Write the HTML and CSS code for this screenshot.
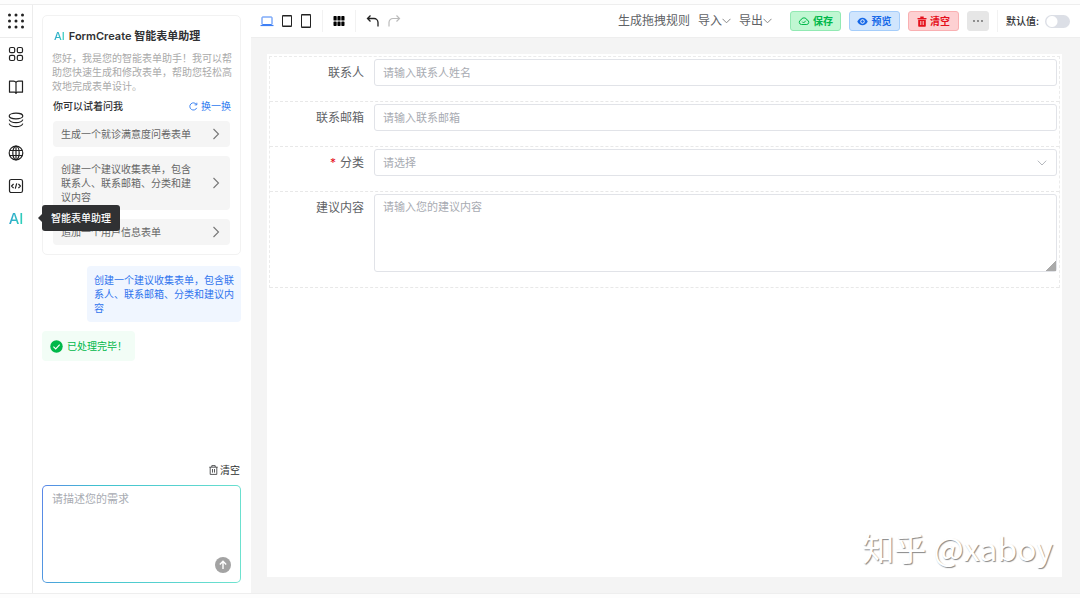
FILE: index.html
```html
<!DOCTYPE html>
<html lang="zh-CN">
<head>
<meta charset="utf-8">
<meta name="viewport" content="width=device-width, initial-scale=1">
<title>FormCreate 智能表单助理</title>
<link rel="stylesheet" href="styles.css">
</head>
<body>
<div class="app">
  <nav class="rail" aria-label="主菜单">
    <button class="rail-home" aria-label="应用">
      <svg width="18" height="18" viewBox="0 0 18 18" fill="#222"><circle cx="2.5" cy="3" r="1.5"/><circle cx="9" cy="3" r="1.5"/><circle cx="15.500" cy="3" r="1.5"/><circle cx="2.500" cy="9" r="1.5"/><circle cx="9" cy="9" r="1.5"/><circle cx="15.500" cy="9" r="1.5"/><circle cx="2.500" cy="15" r="1.5"/><circle cx="9" cy="15" r="1.5"/><circle cx="15.500" cy="15" r="1.5"/></svg>
    </button>
    <div class="rail-list">
      <button class="rail-item" aria-label="组件"><svg width="16" height="16" viewBox="0 0 16 16" class="line"><rect x="1.500" y="1.500" width="5.200" height="5.200" rx="1.500"/><rect x="9.300" y="1.500" width="5.200" height="5.200" rx="1.500"/><rect x="1.500" y="9.300" width="5.200" height="5.200" rx="1.500"/><rect x="9.300" y="9.300" width="5.200" height="5.200" rx="1.500"/></svg></button>
      <button class="rail-item" aria-label="模板"><svg width="16" height="16" viewBox="0 0 16 16" class="line"><path d="M8 3.500C7.500 2.500 6.500 2.200 5.500 2.200H1.500v11h5c.8 0 1.300.5 1.500 1.300.2-.8.700-1.300 1.500-1.300h5v-11h-4C9.500 2.200 8.500 2.500 8 3.500zV14.500"/></svg></button>
      <button class="rail-item" aria-label="数据"><svg width="16" height="16" viewBox="0 0 16 16" class="line"><ellipse cx="8" cy="4" rx="6.800" ry="2.800"/><path d="M1.200 7.600c.8 2 3.600 3 6.800 3s6-1 6.800-3M1.200 11.600c.8 2 3.600 3 6.800 3s6-1 6.800-3"/></svg></button>
      <button class="rail-item" aria-label="多语言"><svg width="16" height="16" viewBox="0 0 16 16" class="line"><circle cx="8" cy="8" r="6.800"/><ellipse cx="8" cy="8" rx="3.200" ry="6.800"/><path d="M8 1.300v13.400M1.900 5.500h12.200M1.900 10.500h12.200"/></svg></button>
      <button class="rail-item" aria-label="代码"><svg width="16" height="16" viewBox="0 0 16 16" class="line"><rect x="1.500" y="1.500" width="13" height="13" rx="1.800"/><path d="M5.600 5.800 3.600 8l2 2.200M10.400 5.800l2 2.200-2 2.200M8.700 5.300l-1.400 5.400"/></svg></button>
      <button class="rail-item rail-ai" aria-describedby="ai-tip"><span class="ai-mark">AI</span><span class="tip" role="tooltip" id="ai-tip">智能表单助理</span></button>
    </div>
  </nav>

  <aside class="assistant">
    <section class="intro">
      <h1 class="intro-title"><span class="ai-mark">AI</span><span>FormCreate 智能表单助理</span></h1>
      <p class="intro-text">您好，我是您的智能表单助手！我可以帮助您快速生成和修改表单，帮助您轻松高效地完成表单设计。</p>
      <div class="ask-head">
        <h2 class="ask-title">你可以试着问我</h2>
        <button class="swap"><svg width="9" height="9" viewBox="0 0 10 10" fill="none" stroke="currentColor"><path d="M8.600 6.500A4 4 0 1 1 8.300 2.800M8.700.8v2.400H6.300"/></svg>换一换</button>
      </div>
      <div class="asks">
        <button class="ask"><span class="ask-label">生成一个就诊满意度问卷表单</span><svg class="chev" width="8" height="12" viewBox="0 0 8 12"><path d="M1.500 1 6.500 6l-5 5"/></svg></button>
        <button class="ask"><span class="ask-label">创建一个建议收集表单，包含联系人、联系邮箱、分类和建议内容</span><svg class="chev" width="8" height="12" viewBox="0 0 8 12"><path d="M1.500 1 6.500 6l-5 5"/></svg></button>
        <button class="ask"><span class="ask-label">追加一个用户信息表单</span><svg class="chev" width="8" height="12" viewBox="0 0 8 12"><path d="M1.500 1 6.500 6l-5 5"/></svg></button>
      </div>
    </section>
    <p class="bubble">创建一个建议收集表单，包含联系人、联系邮箱、分类和建议内容</p>
    <p class="done"><svg width="13" height="13" viewBox="0 0 13 13"><circle cx="6.500" cy="6.500" r="6.200" fill="#00b84a"/><path d="M3.400 6.600 5.700 8.900 9.700 4.600" fill="none" stroke="#fff" stroke-width="1.100"/></svg>已处理完毕！</p>
    <div class="composer">
      <button class="wipe"><svg width="9" height="10" viewBox="0 0 9 10" fill="none" stroke="currentColor" stroke-width=".8"><path d="M.3 2.200h8.400M2.800 2V.6h3.400V2M1.200 2.200v7.200h6.600V2.200M3.500 4v3.600M5.500 4v3.600"/></svg>清空</button>
      <div class="prompt">
        <textarea class="prompt-input" aria-label="需求" placeholder="请描述您的需求"></textarea>
        <button class="send" aria-label="发送"><svg width="16" height="16" viewBox="0 0 16 16"><circle cx="8" cy="8" r="8" fill="#a3a3a3"/><path d="M8 12V4.500M4.800 7.500 8 4.300l3.200 3.200" fill="none" stroke="#fff" stroke-width="1.400"/></svg></button>
      </div>
    </div>
  </aside>

  <main class="work">
    <header class="toolbar">
      <div class="tools">
        <button class="tool tool-on" aria-label="电脑"><svg width="14" height="14" viewBox="0 0 14 14" fill="none" stroke="currentColor"><rect x="2" y="3" width="10" height="7.500" rx=".5"/><path d="M.5 11.500h13" stroke-width="1.200"/></svg></button>
        <button class="tool" aria-label="平板"><svg width="12" height="14" viewBox="0 0 12 14"><rect x="1.500" y="1.500" width="9" height="11" rx=".6" fill="none" stroke="currentColor"/><path d="M1.500 1.800h9M1.500 12.200h9" stroke="currentColor" stroke-width="1.500"/></svg></button>
        <button class="tool" aria-label="手机"><svg width="12" height="16" viewBox="0 0 12 16"><rect x="1.500" y="1.500" width="9" height="13" rx=".6" fill="none" stroke="currentColor"/><path d="M1.500 1.800h9M1.500 14.200h9" stroke="currentColor" stroke-width="1.500"/></svg></button>
        <span class="rule"></span>
        <button class="tool" aria-label="网格"><svg width="12" height="12" viewBox="0 0 12 12" fill="#000"><rect x=".5" y="1" width="3.200" height="4.600" rx=".7"/><rect x="4.400" y="1" width="3.200" height="4.600" rx=".7"/><rect x="8.300" y="1" width="3.200" height="4.600" rx=".7"/><rect x=".5" y="6.400" width="3.200" height="4.600" rx=".7"/><rect x="4.400" y="6.400" width="3.200" height="4.600" rx=".7"/><rect x="8.300" y="6.400" width="3.200" height="4.600" rx=".7"/></svg></button>
        <span class="rule"></span>
        <button class="tool" aria-label="撤销"><svg width="14" height="14" viewBox="0 0 14 14" fill="none" stroke="currentColor" stroke-width="1.300"><path d="M4.500 1.500 1.500 4.500l3 3M1.500 4.500H8a4 4 0 0 1 4 4V12.500"/></svg></button>
        <button class="tool tool-off" aria-label="重做"><svg width="14" height="14" viewBox="0 0 14 14" fill="none" stroke="currentColor" stroke-width="1.200"><path d="M9.500 1.500l3 3-3 3M12.500 4.500H6a4 4 0 0 0-4 4V12.500"/></svg></button>
      </div>
      <div class="actions">
        <button class="link">生成拖拽规则</button>
        <button class="link">导入<svg width="9" height="6" viewBox="0 0 9 6"><path d="M.5.800l4 4 4-4"/></svg></button>
        <button class="link">导出<svg width="9" height="6" viewBox="0 0 9 6"><path d="M.5.800l4 4 4-4"/></svg></button>
        <div class="buttons">
          <button class="btn btn-save"><svg width="12" height="10" viewBox="0 0 12 10" fill="none" stroke="currentColor"><path d="M3.500 8.500h5.300a2.300 2.300 0 0 0 .3-4.500A3.300 3.300 0 0 0 2.900 4a2.300 2.300 0 0 0 .6 4.500zM4.300 5.700l1.300 1.300 2.200-2.300"/></svg>保存</button>
          <button class="btn btn-view"><svg width="11" height="9" viewBox="0 0 11 9"><path d="M.3 4.500C1.500 2 3.300.7 5.500.7s4 1.300 5.200 3.800C9.500 7 7.700 8.300 5.500 8.300S1.500 7 .3 4.500z" fill="currentColor"/><circle cx="5.500" cy="4.500" r="1.800" fill="none" stroke="#fff" stroke-width=".9"/></svg>预览</button>
          <button class="btn btn-clear"><svg width="10" height="11" viewBox="0 0 10 11"><path d="M.5 2h2.800V.5h3.400V2h2.800v1.200H.5zM1.200 3.700h7.600V10a.7.700 0 0 1-.7.700H1.900A.7.700 0 0 1 1.200 10z" fill="currentColor"/><path d="M3.800 5v4M6.200 5v4" stroke="#fff" stroke-width=".8"/></svg>清空</button>
          <button class="btn btn-more" aria-label="更多"><svg width="12" height="4" viewBox="0 0 12 4" fill="#666"><circle cx="2" cy="2" r=".9"/><circle cx="6" cy="2" r=".9"/><circle cx="10" cy="2" r=".9"/></svg></button>
        </div>
        <span class="rule"></span>
        <div class="default">
          <label for="default-value">默认值:</label>
          <input class="switch" type="checkbox" role="switch" id="default-value">
        </div>
      </div>
    </header>
    <div class="stage">
      <div class="page">
        <form class="form">
          <div class="field"><label class="label" for="contact">联系人</label><input class="control" id="contact" type="text" placeholder="请输入联系人姓名"></div>
          <div class="field"><label class="label" for="email">联系邮箱</label><input class="control" id="email" type="text" placeholder="请输入联系邮箱"></div>
          <div class="field"><label class="label" for="kind"><span class="must">*</span>分类</label>
            <div class="pick"><select class="control" id="kind"><option>请选择</option></select><svg width="10" height="6" viewBox="0 0 10 6"><path d="M.8.700 5 5 9.200.7"/></svg></div></div>
          <div class="field"><label class="label" for="advice">建议内容</label><textarea class="control area" id="advice" placeholder="请输入您的建议内容"></textarea></div>
        </form>
        <div class="mark">知乎 @xaboy</div>
      </div>
    </div>
  </main>
</div>
</body>
</html>
```
FILE: styles.css
```css
* { box-sizing: border-box; }

body {
  margin: 0;
  padding: 4px 0;
  height: 100vh;
  background: #fdfdfd;
  color: #303133;
  font: 10px/14px Inter, "Noto Sans CJK SC", sans-serif;
}

h1, h2, p { margin: 0; }

button, input, select, textarea { font: inherit; color: inherit; }

button {
  display: flex;
  align-items: center;
  justify-content: center;
  padding: 0;
  border: 0;
  background: none;
}

svg { display: block; flex: none; }

.app {
  display: flex;
  height: 100%;
  border: solid #eee;
  border-width: 1px 0;
  background: #fff;
}

/* Icon rail */
.rail {
  flex: none;
  width: 33px;
  border-right: 1px solid #ececec;
}

.rail-home {
  width: 100%;
  height: 33px;
  border-bottom: 1px solid #ececec;
}

.rail-list { margin-top: -1px; }

.rail-item {
  position: relative;
  width: 100%;
  height: 33px;
}

.line {
  fill: none;
  stroke: #222;
  stroke-width: 1.200;
  stroke-linejoin: round;
}

.ai-mark {
  background: linear-gradient(100deg, #2f9fd0, #2fd6b8);
  background-clip: text;
  color: transparent;
}

.rail-ai .ai-mark { font-size: 15px; font-weight: 500; }

.tip {
  position: absolute;
  z-index: 2;
  left: 42px;
  top: 3px;
  padding: 6px 9px;
  border-radius: 3px;
  background: #303133;
  color: #fff;
  font-weight: 500;
  white-space: nowrap;
}

.tip::before {
  content: "";
  position: absolute;
  left: -4px;
  top: 9px;
  border: solid transparent;
  border-width: 4px 4px 4px 0;
  border-right-color: #303133;
}

/* Assistant panel */
.assistant {
  display: flex;
  flex: none;
  flex-direction: column;
  width: 218px;
  padding: 10px 10px 10px 9px;
}

.intro {
  padding: 11px 8px 9px 9px;
  border: 1px solid #f2f2f2;
  border-radius: 5px;
}

.intro-title {
  display: flex;
  gap: 4px;
  padding-left: 2px;
  font-size: 11px;
  line-height: 18px;
  font-weight: 600;
}

.intro-title .ai-mark { font-weight: 500; }

.intro-text {
  margin-top: 6px;
  color: #aaa;
}

.ask-head {
  display: flex;
  justify-content: space-between;
  margin: 6px 1px 8px;
}

.ask-title { font-size: 10px; font-weight: 500; }

.swap { gap: 3px; color: #2f7bf0; }

.asks {
  display: grid;
  gap: 9px;
  margin: 0 2px 0 1px;
}

.ask {
  justify-content: space-between;
  padding: 6px 10px 6px 8px;
  border-radius: 4px;
  background: #f5f5f5;
  color: #666;
  text-align: left;
}

.ask-label { max-width: 130px; }

.chev { fill: none; stroke: #777; stroke-width: 1.100; }

.bubble {
  align-self: flex-end;
  max-width: 154px;
  margin-top: 11px;
  padding: 7px;
  border-radius: 4px;
  background: #f0f6ff;
  color: #2f74ee;
}

.done {
  display: flex;
  align-items: center;
  align-self: flex-start;
  gap: 4px;
  margin-top: 9px;
  padding: 8px;
  border-radius: 4px;
  background: #f2fdf6;
  color: #00b84a;
}

.composer {
  display: flex;
  flex-direction: column;
  gap: 8px;
  margin-top: auto;
}

.wipe {
  align-self: flex-end;
  gap: 2px;
  margin-right: 1px;
}

.prompt {
  display: flex;
  align-items: flex-end;
  height: 98px;
  padding: 5px 9px;
  border: 1px solid transparent;
  border-radius: 5px;
  background: linear-gradient(#fff, #fff) padding-box, linear-gradient(100deg, #5b86e8, #3fc0cf 25%, #6fe3cf) border-box;
}

.prompt-input {
  flex: 1;
  min-width: 0;
  height: 100%;
  padding: 0;
  border: 0;
  outline: 0;
  background: none;
  font-size: 11px;
  line-height: 16px;
  resize: none;
}

.send { margin-bottom: 4px; }

::placeholder { color: #a8abb2; opacity: 1; }

/* Toolbar */
.work {
  display: flex;
  flex: 1;
  flex-direction: column;
  min-width: 0;
}

.toolbar {
  display: flex;
  align-items: center;
  justify-content: space-between;
  height: 33px;
  padding: 0 10px 0 9px;
  border-bottom: 1px solid #eee;
}

.tools, .actions, .buttons { display: flex; align-items: center; }

.tools { gap: 7px; }

.tool { color: #222; }

.tool-on { color: #3f80f5; }

.tool-off { color: #bbb; }

.rule {
  width: 1px;
  height: 22px;
  margin: 0 3px;
  background: #f2f2f2;
}

.actions { gap: 8px; }

.link {
  color: #606266;
  font-size: 12px;
  line-height: 18px;
}

.link svg { fill: none; stroke: #888; }

.buttons { gap: 8px; margin-left: 10px; }

.btn {
  gap: 3px;
  width: 51px;
  height: 20px;
  border: 1px solid;
  border-radius: 3px;
  font-weight: 700;
}

.btn-save { border-color: #92e9b3; background: #c0f7d2; color: #00b84a; }
.btn-view { border-color: #a5cdfa; background: #d0e5fd; color: #1769e8; }
.btn-clear { border-color: #f9b0b2; background: #fdd0d2; color: #e5101c; }
.btn-more { width: 22px; border-color: #e6e6e6; background: #e6e6e6; }

.actions .rule { margin: 0; }

.default {
  display: flex;
  align-items: center;
  gap: 6px;
  font-weight: 500;
}

.switch {
  appearance: none;
  width: 25px;
  height: 13px;
  margin: 0;
  border-radius: 7px;
  background: radial-gradient(circle at 7px 50%, #fff 5px, transparent 6px) #dcdfe6;
}

/* Canvas */
.stage {
  display: flex;
  flex: 1;
  padding: 16px 18px 16px 16px;
  background: #f4f4f4;
}

.page {
  position: relative;
  flex: 1;
  padding: 2px;
  background: #fff;
}

.form { border: 1px dashed #ebebeb; border-bottom: 0; }

.field {
  display: flex;
  gap: 10px;
  padding: 2px 2px 15px 0;
  border-bottom: 1px dashed #e8e8e8;
}

.label {
  flex: none;
  width: 94px;
  color: #606266;
  font-size: 12px;
  line-height: 27px;
  text-align: right;
}

.must { margin-right: 4px; color: #e5101c; }

.control {
  flex: 1;
  width: 100%;
  min-width: 0;
  height: 27px;
  padding: 0 8px;
  border: 1px solid #e1e3e8;
  border-radius: 3px;
  outline: 0;
  background: #fff;
  font-size: 11px;
}

.pick { position: relative; flex: 1; }

.pick .control { display: block; appearance: none; color: #a8abb2; }

.pick svg {
  position: absolute;
  right: 10px;
  top: 11px;
  fill: none;
  stroke: #b4b7bd;
}

.area {
  height: 78px;
  padding: 4px 8px;
  line-height: 17px;
  resize: vertical;
}

.area::-webkit-resizer {
  background: linear-gradient(135deg, transparent 65%, #aaa 65%);
}

/* Signature in the corner of the canvas */
.mark {
  position: absolute;
  right: 9px;
  bottom: 8px;
  color: #fff;
  font: 32px/44px "Noto Sans CJK SC", sans-serif;
  text-shadow: 1px 1px 1px #888;
}
```
